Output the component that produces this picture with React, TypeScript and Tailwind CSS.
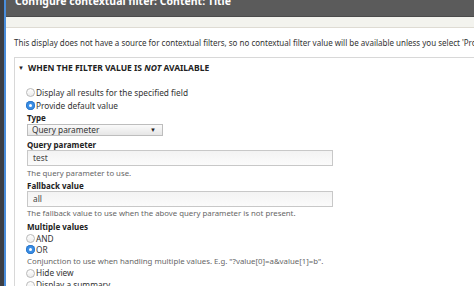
import React from "react";

function Radio({ checked, label, h = "h-[11px]" }: { checked?: boolean; label: string; h?: string }) {
  return (
    <div className={`flex ${h} items-center gap-[1px]`}>
      {checked ? (
        <span className="flex h-[9px] w-[9px] shrink-0 items-center justify-center rounded-full bg-[#3a8ee6] shadow-[inset_0_0_0_1px_#2f78c8]">
          <span className="h-[3px] w-[3px] rounded-full bg-white" />
        </span>
      ) : (
        <span className="h-[9px] w-[9px] shrink-0 rounded-full border border-[#b9b9b9] bg-gradient-to-b from-white to-[#ececec]" />
      )}
      <span className="whitespace-nowrap text-[8.3px] leading-[10px] text-[#333]">{label}</span>
    </div>
  );
}

function Label({ children }: { children: React.ReactNode }) {
  return <div className="whitespace-nowrap text-[8px] font-bold leading-[10px] text-[#222]">{children}</div>;
}

function Hint({ children }: { children: React.ReactNode }) {
  return <div className="whitespace-nowrap text-[7.8px] leading-[10px] text-[#666]">{children}</div>;
}

function TextInput({ value }: { value: string }) {
  return (
    <div className="flex h-[16px] w-[306px] items-center border border-[#c8c8c8] bg-gradient-to-b from-[#f3f3f3] to-[#fbfbfb] px-[5px] text-[8.3px] text-[#444]">
      {value}
    </div>
  );
}

export default function App() {
  return (
    <div className="flex h-[286px] w-[474px] overflow-hidden bg-white font-['Noto_Sans',sans-serif]">
      {/* page behind the modal */}
      <div className="w-1 shrink-0 bg-[#3c3f45]" />
      <div className="w-[2px] shrink-0 bg-[#4a8ddb]" />

      <div className="flex min-w-0 flex-1 flex-col">
        {/* title bar, scrolled so the title is half hidden */}
        <div className="h-[17px] shrink-0 overflow-hidden border-b border-[#4b4b4b] bg-[#5b5b5b] pl-[9px]">
          <div className="-mt-[5px] whitespace-nowrap text-[10.5px] font-bold leading-[12px] text-white">
            Configure contextual filter: Content: Title
          </div>
        </div>
        <div className="h-[11px] shrink-0 border-b border-[#dedbd3] bg-[#f3f3ee]" />

        <div className="flex flex-col pl-[8px]">
          <div className="mt-[10px] whitespace-nowrap text-[8px] leading-[10px] text-[#333]">
            This display does not have a source for contextual filters, so no contextual filter value will be available unless you select 'Provide default value'.
          </div>

          {/* fieldset */}
          <div className="mt-[9px] border-l border-t border-[#d8d8d8] pl-[12px]">
            <div className="-ml-[9px] mt-[5px] flex items-center gap-[4px] whitespace-nowrap text-[8.5px] font-bold leading-[10px] text-[#222]">
              <span className="text-[6px]">▼</span>
              <span>
                WHEN THE FILTER VALUE IS <i>NOT</i> AVAILABLE
              </span>
            </div>

            <div className="-ml-[1px] mt-[13px] flex flex-col">
              <Radio h="h-[13px]" label="Display all results for the specified field" />
              <Radio h="h-[13px]" checked label="Provide default value" />
            </div>

            <div className="mt-[1px]">
              <Label>Type</Label>
              <div className="mt-[1px] flex h-[12px] w-[136px] items-center justify-between border border-[#bdbdbd] bg-gradient-to-b from-[#fafafa] to-[#e6e6e6] pl-[4px] pr-[6px] text-[8.3px] leading-[10px] text-[#333]">
                <span>Query parameter</span>
                <span className="text-[6px] text-[#222]">▼</span>
              </div>
            </div>

            <div className="mt-[4px]">
              <Label>Query parameter</Label>
              <TextInput value="test" />
              <div className="mt-[2px]">
                <Hint>The query parameter to use.</Hint>
              </div>
            </div>

            <div className="mt-[3px]">
              <Label>Fallback value</Label>
              <TextInput value="all" />
              <div className="mt-[1px]">
                <Hint>The fallback value to use when the above query parameter is not present.</Hint>
              </div>
            </div>

            <div className="mt-[4px]">
              <Label>Multiple values</Label>
              <div className="-ml-[1px] mt-[1px] flex flex-col">
                <Radio label="AND" />
                <Radio checked label="OR" />
              </div>
              <div className="mt-[1px]">
                <Hint>Conjunction to use when handling multiple values. E.g. "?value[0]=a&amp;value[1]=b".</Hint>
              </div>
            </div>

            <div className="-ml-[1px] mt-[1px] flex flex-col">
              <Radio h="h-[12px]" label="Hide view" />
              <Radio h="h-[12px]" label="Display a summary" />
            </div>
          </div>
        </div>
      </div>
    </div>
  );
}
